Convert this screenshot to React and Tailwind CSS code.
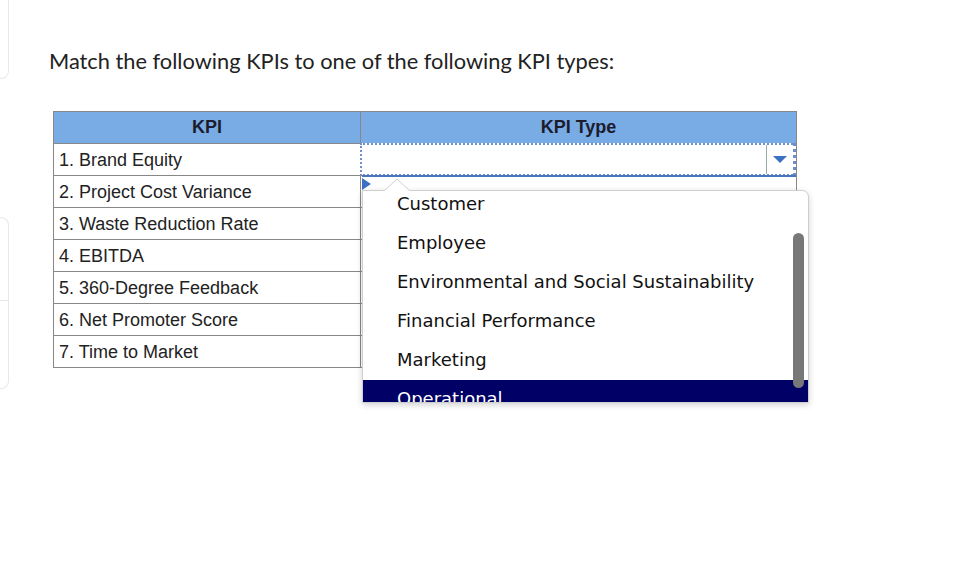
import React from "react";

const kpis = [
  "1. Brand Equity",
  "2. Project Cost Variance",
  "3. Waste Reduction Rate",
  "4. EBITDA",
  "5. 360-Degree Feedback",
  "6. Net Promoter Score",
  "7. Time to Market",
];

const types = [
  "Customer",
  "Employee",
  "Environmental and Social Sustainability",
  "Financial Performance",
  "Marketing",
  "Operational",
];

export default function App() {
  return (
    <div className="w-[970px] h-[574px] bg-white flex overflow-hidden">
      {/* left edge cards */}
      <div className="w-[9px] shrink-0 flex flex-col">
        <div className="h-[89px] mt-[-10px] border border-l-0 border-[#e8e8e8] rounded-br-[8px]" />
        <div className="h-[172px] mt-[138px] border border-l-0 border-[#e8e8e8] rounded-r-[8px] flex flex-col">
          <div className="h-[83px] border-b border-[#e8e8e8]" />
        </div>
      </div>

      <div className="ml-[40px] flex flex-col">
        <h1
          className="mt-[46px] text-[21.8px] leading-[30px] text-[#222]"
          style={{ fontFamily: "Lato, 'Open Sans', sans-serif" }}
        >
          Match the following KPIs to one of the following KPI types:
        </h1>

        <div
          className="relative mt-[35px] ml-[4px] w-[744px] text-[18px]"
          style={{ fontFamily: "'Liberation Sans', Arial, sans-serif" }}
        >
          <div className="grid grid-cols-[307px_435px] border border-[#888]">
            <div className="h-[31px] bg-[#79abe5] border-r border-[#888] flex items-center justify-center font-bold text-[#1c1c2c]">
              KPI
            </div>
            <div className="h-[31px] bg-[#79abe5] flex items-center justify-center font-bold text-[#1c1c2c]">
              KPI Type
            </div>
            {kpis.map((k, i) => (
              <React.Fragment key={k}>
                <div className="h-[32px] border-t border-r border-[#888] flex items-center pl-[5px] pt-[2px] text-[#222]">
                  {k}
                </div>
                <div className="h-[32px] border-t border-[#888]">
                  {i === 0 && (
                    <div className="border-2 border-dotted border-[#6e8fc9] border-r-[3px] ml-[-1px] mt-[-1px] h-[33px] flex justify-end bg-white">
                      <div className="w-[27px] border-l border-[#9aa] flex items-center justify-center">
                        <svg width="14" height="8" viewBox="0 0 14 8">
                          <polygon points="0,0 14,0 7,7" fill="#3b70c2" />
                        </svg>
                      </div>
                    </div>
                  )}
                  {i === 1 && (
                    <div className="h-full border-t-2 border-[#4a74bb] ml-[1px] mt-[-1px] relative">
                      <svg className="absolute left-0 top-[1px]" width="9" height="12" viewBox="0 0 9 12">
                        <polygon points="0,0 9,6 0,12" fill="#3b70c2" />
                      </svg>
                    </div>
                  )}
                </div>
              </React.Fragment>
            ))}
          </div>

          {/* dropdown popup */}
          <div className="absolute left-[309px] top-[79px] w-[447px] h-[213px] bg-white border border-[#cfcfcf] rounded-tr-[7px] shadow-[0_2px_6px_rgba(0,0,0,0.18)] overflow-hidden">
            <div
              className="mt-[-6px] flex flex-col text-[18px] text-[#111]"
              style={{ fontFamily: "'DejaVu Sans', Verdana, sans-serif" }}
            >
              {types.map((t, i) => (
                <div
                  key={t}
                  className={
                    i === 5
                      ? "h-[39px] flex items-center pl-[34px] pb-[2px] bg-[#000066] text-white"
                      : "h-[39px] flex items-center pl-[34px] pb-[2px]"
                  }
                >
                  {t}
                </div>
              ))}
            </div>
            <div className="absolute right-[4px] top-[42px] w-[11px] h-[155px] rounded-full bg-[#787878]" />
          </div>
          {/* caret */}
          <svg className="absolute left-[331px] top-[68px]" width="26" height="12" viewBox="0 0 26 12">
            <polygon points="0,12 13,0 26,12" fill="white" />
            <polyline points="0,12 13,0 26,12" fill="none" stroke="#cfcfcf" strokeWidth="1" />
          </svg>
        </div>
      </div>
    </div>
  );
}
